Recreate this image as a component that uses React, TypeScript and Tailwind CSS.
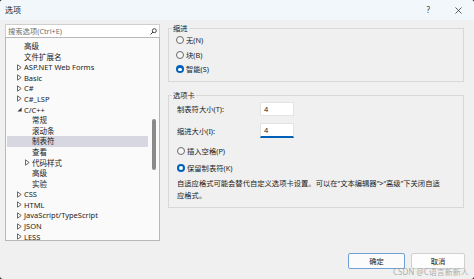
import React from "react";

type Node = { label: string; level: 0 | 1; arrow?: "closed" | "open"; selected?: boolean };

const items: Node[] = [
  { label: "高级", level: 0 },
  { label: "文件扩展名", level: 0 },
  { label: "ASP.NET Web Forms", level: 0, arrow: "closed" },
  { label: "Basic", level: 0, arrow: "closed" },
  { label: "C#", level: 0, arrow: "closed" },
  { label: "C#_LSP", level: 0, arrow: "closed" },
  { label: "C/C++", level: 0, arrow: "open" },
  { label: "常规", level: 1 },
  { label: "滚动条", level: 1 },
  { label: "制表符", level: 1, selected: true },
  { label: "查看", level: 1 },
  { label: "代码样式", level: 1, arrow: "closed" },
  { label: "高级", level: 1 },
  { label: "实验", level: 1 },
  { label: "CSS", level: 0, arrow: "closed" },
  { label: "HTML", level: 0, arrow: "closed" },
  { label: "JavaScript/TypeScript", level: 0, arrow: "closed" },
  { label: "JSON", level: 0, arrow: "closed" },
  { label: "LESS", level: 0, arrow: "closed" },
];

function Arrow({ kind }: { kind?: "closed" | "open" }) {
  if (!kind) return null;
  if (kind === "closed")
    return (
      <svg width="5" height="7" viewBox="0 0 5 7" className="ml-[1px]">
        <path d="M0.5 0.8 L4.2 3.5 L0.5 6.2 Z" fill="none" stroke="#5a5a5a" strokeWidth="0.9" />
      </svg>
    );
  return (
    <svg width="5" height="5" viewBox="0 0 5 5" className="ml-[1px]">
      <path d="M4.6 0.4 L4.6 4.6 L0.4 4.6 Z" fill="#3a3a3a" />
    </svg>
  );
}

function Radio({ checked, label, className }: { checked?: boolean; label: string; className?: string }) {
  return (
    <div className={"flex items-center " + (className ?? "")}>
      {checked ? (
        <div className="w-[8px] h-[8px] rounded-full bg-[#005fb8] flex items-center justify-center">
          <div className="w-[3.5px] h-[3.5px] rounded-full bg-white" />
        </div>
      ) : (
        <div className="w-[8px] h-[8px] rounded-full border border-[#6a6a6a] bg-[#f6f6f6]" />
      )}
      <span className="ml-[2px]">{label}</span>
    </div>
  );
}

export default function App() {
  return (
    <div className="w-[474px] h-[279px] bg-[#202020] overflow-hidden">
      <div className="w-[474px] h-[279px] rounded-[3px] overflow-hidden bg-[#f0f0f0] flex flex-col text-[7.3px] leading-[10px] text-[#1b1b1b] [font-family:'Noto_Sans','Noto_Sans_CJK_SC',sans-serif]">
        {/* Title bar */}
        <div className="h-[20px] shrink-0 bg-[#f2f7fc] flex items-center">
          <span className="ml-[5px] text-[8px]">选项</span>
          <span className="ml-auto mr-[25px] text-[8px] text-[#333]">?</span>
          <svg width="7" height="7" viewBox="0 0 7 7" className="mr-[12px]">
            <path d="M0.5 0.5 L6.5 6.5 M6.5 0.5 L0.5 6.5" stroke="#333" strokeWidth="0.8" />
          </svg>
        </div>

        {/* Body */}
        <div className="h-[221px] shrink-0 flex pl-[5px]">
          {/* Left column */}
          <div className="w-[155px] mt-[4px] flex flex-col">
            <div className="h-[14px] bg-white border border-[#cfcfcf] flex items-center pl-[2px] pr-[2px]">
              <span className="text-[#6e6e6e]">搜索选项(Ctrl+E)</span>
              <svg width="7" height="7" viewBox="0 0 7 7" className="ml-auto">
                <circle cx="4.3" cy="2.7" r="2" fill="none" stroke="#333" strokeWidth="0.9" />
                <path d="M2.9 4.1 L0.6 6.4" stroke="#333" strokeWidth="1" />
              </svg>
            </div>
            <div className="-mt-px h-[204px] bg-[#fafafa] border border-[#b8b8b8] flex overflow-hidden">
              <div className="w-[142px] pl-[1px] pt-[2.7px]">
                {items.map((it, i) => (
                  <div
                    key={i}
                    className={
                      "h-[10.6px] flex items-center " +
                      (it.level === 0 ? "pl-[9px] " : "pl-[17px] ") +
                      (it.selected ? "bg-[#d6d7e1]" : "")
                    }
                  >
                    <div className="w-[8px] flex items-center">
                      <Arrow kind={it.arrow} />
                    </div>
                    <span className="whitespace-nowrap text-[7.5px]">{it.label}</span>
                  </div>
                ))}
              </div>
              <div className="flex-1 pl-[4px]">
                <div className="mt-[81px] w-[4px] h-[51px] rounded-[2px] bg-[#8a8a8a]" />
              </div>
            </div>
          </div>

          {/* Right column */}
          <div className="ml-[8px] mt-[3px] flex flex-col">
            <fieldset className="w-[296px] h-[59px] border border-[#d8d8d8] px-[7px]">
              <legend className="ml-[-4px] px-[1px] leading-[10px]">缩进</legend>
              <Radio label="无(N)" className="h-[14.5px]" />
              <Radio label="块(B)" className="h-[14.5px]" />
              <Radio label="智能(S)" checked className="h-[14.5px]" />
            </fieldset>

            <fieldset className="mt-[8px] w-[296px] h-[118px] border border-[#d8d8d8] px-[7px]">
              <legend className="ml-[-4px] px-[1px] leading-[10px]">选项卡</legend>
              <div className="mt-[2px] h-[14px] flex items-center">
                <span className="pl-[1px] w-[84px]">制表符大小(T):</span>
                <div className="w-[34px] h-[14px] bg-white border border-[#e3e3e3] flex items-center pl-[3px]">4</div>
              </div>
              <div className="mt-[7px] h-[15px] flex items-center">
                <span className="pl-[1px] w-[84px]">缩进大小(I):</span>
                <div className="w-[34px] h-[15px] bg-white border border-[#e3e3e3] border-b-2 border-b-[#005fb8] flex items-center pl-[3px]">4</div>
              </div>
              <Radio label="插入空格(P)" className="mt-[6px] h-[14px] pl-[1px]" />
              <Radio label="保留制表符(K)" checked className="mt-[3px] h-[14px] pl-[1px]" />
              <div className="mt-[2px] pl-[1px] leading-[12px]">
                <div className="whitespace-nowrap">自适应格式可能会替代自定义选项卡设置。可以在“文本编辑器”&gt;“高级”下关闭自适</div>
                <div>应格式。</div>
              </div>
            </fieldset>
          </div>
        </div>

        {/* Footer */}
        <div className="relative flex justify-end pr-[9px] pt-[12px]">
          <button className="w-[57px] h-[16px] bg-[#fbfbfb] border border-[#6f9fd6] rounded-[2px] flex items-center justify-center">
            确定
          </button>
          <button className="ml-[6px] w-[54px] h-[16px] bg-[#fdfdfd] border border-[#d0d0d0] rounded-[2px] flex items-center justify-center">
            取消
          </button>
          <span className="absolute left-[393px] top-[26px] text-[8px] leading-[10px] text-[#9a9a9a]/80 whitespace-nowrap">
            CSDN @C语言新新人
          </span>
        </div>
      </div>
    </div>
  );
}
